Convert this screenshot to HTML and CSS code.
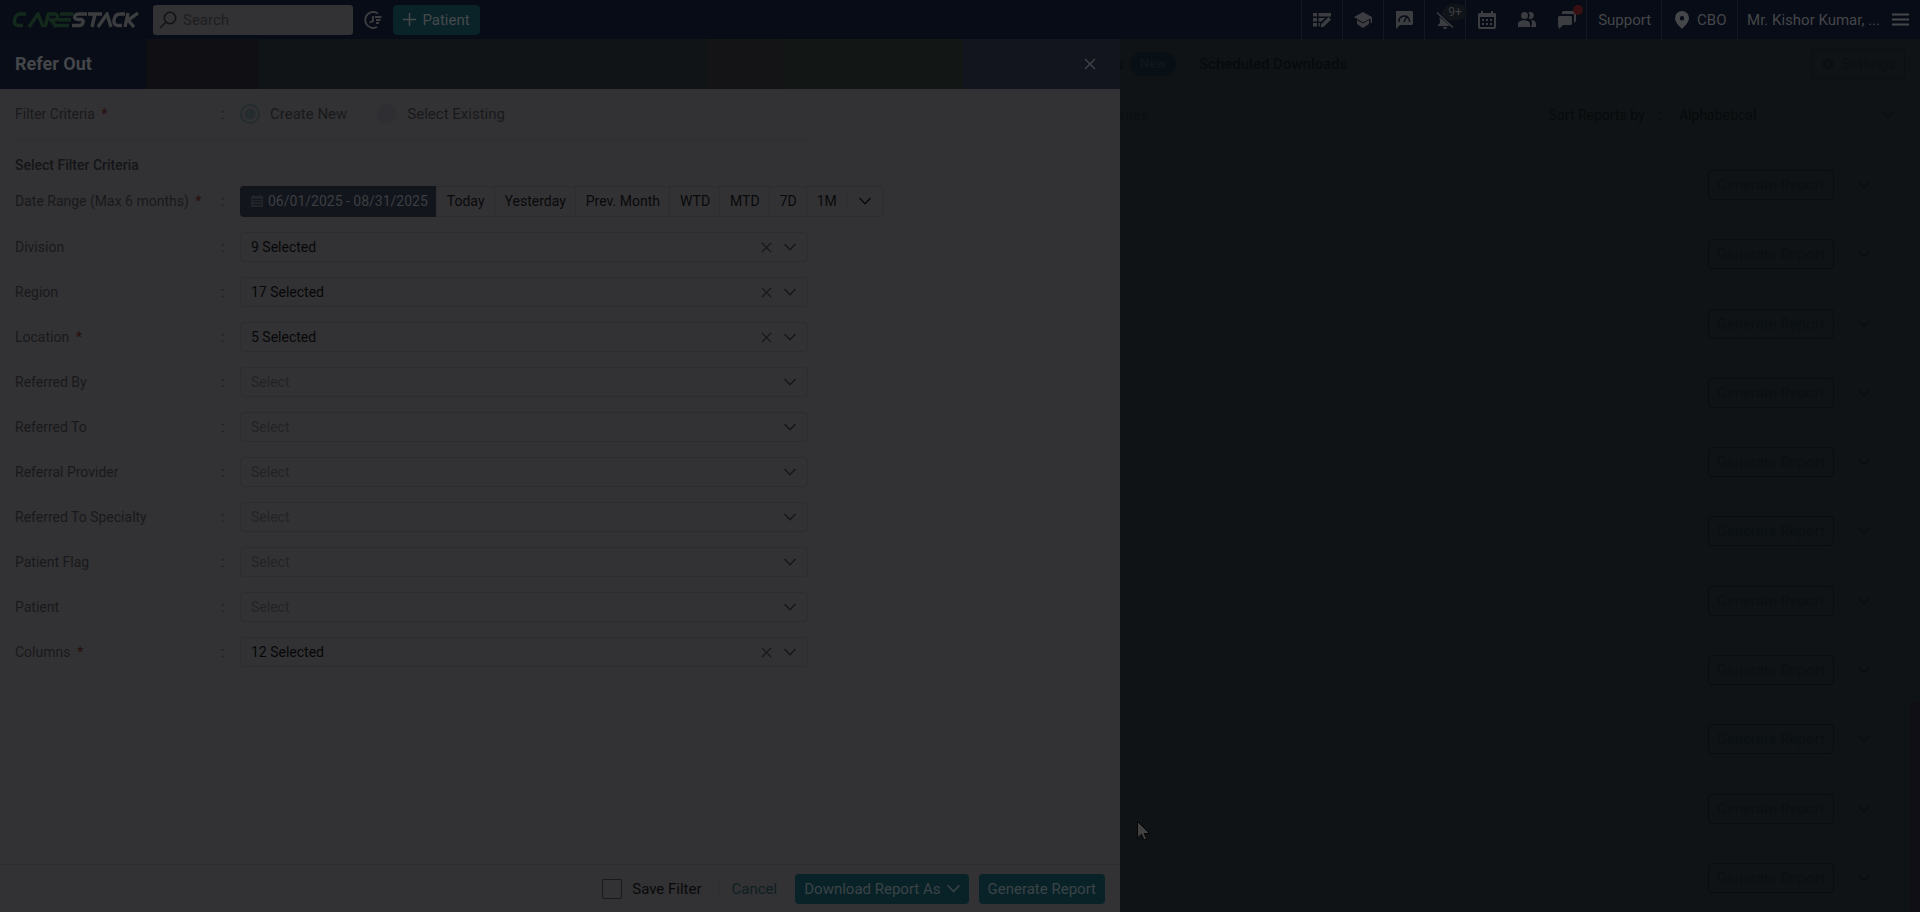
FILE: index.html
```html
<!DOCTYPE html>
<html lang="en">
<head>
<meta charset="utf-8">
<title>CareStack - Refer Out</title>
<link rel="stylesheet" href="styles.css">
</head>
<body>
<svg width="0" height="0" class="defs" aria-hidden="true">
  <symbol id="chev" viewBox="0 0 12 8"><path d="M.5 1L6 6.700 11.500 1" fill="none" stroke="currentColor" stroke-width="1.400"/></symbol>
  <symbol id="x" viewBox="0 0 12 12"><path d="M1 1l10 10M11 1L1 11" fill="none" stroke="currentColor" stroke-width="1.300"/></symbol>
</svg>
<header class="nav">
  <a class="logo" href="#" aria-label="CareStack">
    <svg width="128" height="16" viewBox="0 0 128 16" fill="none" stroke-width="3.400">
      <g class="logo-care"><path d="M14 2H8C5 2 3 5 2.500 8S3 13.500 6 13.500H11M17 15L26 2L31 15M33 15L36.500 2H43C47 2 46 8 42 8H37M40 9l4 6M48 2H61M46 7.800H59M44.500 13.500H57"/></g>
      <g class="logo-stack"><path d="M75 2H67C62 2 61 7.500 66 7.500H69C73 8 71 13.500 67 13.500H60M76 2H90M83 2L80 15M86 15L95 2L99 15M113 2H108C104 2 102.500 5 102 8S103 13.500 106 13.500H110M116 1L113 15M126 1L116 8L122 15"/></g>
    </svg>
  </a>
  <label class="search">
    <svg width="18" height="18" viewBox="0 0 18 18" fill="none" stroke="currentColor" stroke-width="1.500"><circle cx="11" cy="7" r="5.700"/><path d="M7 11L1 17"/></svg>
    <input type="text" placeholder="Search" aria-label="Search">
  </label>
  <button class="icon-btn history" aria-label="Recent">
    <svg width="18" height="18" viewBox="0 0 18 18" fill="none" stroke="currentColor" stroke-width="1.900"><path d="M14 2.500A8 8 0 1 0 13 16M9 5V10L5.500 11.500M11 6H17.500M12 9H16.500M12 12H15"/></svg>
  </button>
  <button class="add"><svg width="13" height="13" viewBox="0 0 13 13" stroke="currentColor" stroke-width="1.500"><path d="M6.500 0V13M0 6.500H13"/></svg>Patient</button>
  <nav class="tools">
    <button class="tool" aria-label="Tasks"><svg width="18" height="16" viewBox="0 0 18 16" fill="currentColor"><path d="M0 1h4v3.500H0zM5.500 1H18v3.500H5.500zM0 6h4v3.500H0zM5.500 6h6.500L8.500 9.500h-3zM0 11h4v3.500H0zM5.500 11h2l-1 3.500h-1zM8 12.500L15.500 5 18 7.500 10.500 15H8z"/></svg></button>
    <button class="tool" aria-label="Learning"><svg width="18" height="16" viewBox="0 0 18 16" fill="currentColor"><path d="M9 0l9 5v6h-1.500V6.500L9 10.500 0 5zM3 8l6 3.500L15 8v4l-6 4-6-4z"/></svg></button>
    <button class="tool" aria-label="Dashboard"><svg width="18" height="18" viewBox="0 0 18 18" fill="currentColor"><path d="M1 0h16l1 1v12l-1 1H5l-4 4V1z"/><path class="cutout" d="M4 11a5.300 5.300 0 0 1 10-3M14.500 11a5 5 0 0 0-.5-3M9 11l3-6" fill="none" stroke-width="1.500"/></svg></button>
    <button class="tool" aria-label="Notifications"><svg width="18" height="18" viewBox="0 0 18 18" fill="currentColor"><path d="M7 2.500C7 0 10.500 0 10.500 2.500 14 4 14 7 14 9.500L6.500 3zM3.500 6L14 15H2v-1l2-2zM7 16h4a2 2 0 0 1-4 0z"/><path d="M1 1.500l16 15" stroke="currentColor" stroke-width="1.600"/></svg><span class="count">9+</span></button>
    <div class="group">
      <button class="icon-btn" aria-label="Calendar"><svg width="18" height="18" viewBox="0 0 18 18" fill="currentColor"><path fill-rule="evenodd" d="M1 2h2V0h2v2h8V0h2v2h2l1 1v13l-1 2H1l-1-2V3zM2 6v10h14V6zM4 8h2v2H4zm4 0h2v2H8zm4 0h2v2h-2zm-8 4h2v2H4zm4 0h2v2H8zm4 0h2v2h-2z"/></svg></button>
      <button class="icon-btn" aria-label="Patients"><svg width="18" height="15" viewBox="0 0 18 15" fill="currentColor"><circle cx="6.500" cy="3.500" r="3.500"/><path d="M0 15v-3c0-5 12-5 12 0v3zM10.500.5a3.500 3.500 0 1 1 0 6 5 5 0 0 0 0-6zM13 15h5v-3c0-2.500-2-4-5-4 1 1 1 2 1 4z"/></svg></button>
      <button class="icon-btn" aria-label="Messages"><svg width="18" height="18" viewBox="0 0 18 18" fill="currentColor"><path d="M5 0h12l1 1v9l-2 2V3H4V1zM1 5h12l1 1v7l-1 1H5l-4 4-1-4V6z"/></svg><span class="dot"></span></button>
    </div>
    <a class="item" href="#">Support</a>
    <a class="item place" href="#"><svg width="14" height="18" viewBox="0 0 14 18" fill="currentColor"><path fill-rule="evenodd" d="M7 0a7 7 0 0 1 7 7c0 4-4 8-7 11C4 15 0 11 0 7a7 7 0 0 1 7-7zm0 5a2.200 2.200 0 1 0 0 4.400A2.200 2.200 0 0 0 7 5z"/></svg>CBO</a>
    <button class="item user">Mr. Kishor Kumar, ...<svg width="17" height="13" viewBox="0 0 17 13" stroke="currentColor" stroke-width="2"><path d="M0 1.500H17M0 6.500H17M0 11.500H17"/></svg></button>
  </nav>
</header>
<div class="work">
  <section class="drawer">
    <header class="drawer-head"><h1>Refer Out</h1><button class="icon-btn close" aria-label="Close"><svg width="12" height="12"><use href="#x"/></svg></button></header>
    <form class="form">
      <div class="row criteria">
        <span class="label">Filter Criteria <b>*</b></span><span class="colon">:</span>
        <label class="radio"><input type="radio" name="mode" checked>Create New</label>
        <label class="radio"><input type="radio" name="mode">Select Existing</label>
      </div>
      <h2>Select Filter Criteria</h2>
      <div class="row dates">
        <span class="label">Date Range (Max 6 months) <b>*</b></span><span class="colon">:</span>
        <div class="ranges">
          <button type="button" class="chosen"><svg width="12" height="12" viewBox="0 0 12 12" fill="currentColor"><path fill-rule="evenodd" d="M0 1h2V0h2v1h4V0h2v1h2v11H0zM1 4v1h10V4zM2 6v1h8V6zM2 9v1h8V9z"/></svg>06/01/2025 - 08/31/2025</button>
          <button type="button">Today</button><button type="button">Yesterday</button><button type="button">Prev. Month</button><button type="button">WTD</button><button type="button">MTD</button><button type="button">7D</button><button type="button">1M</button>
          <button type="button" class="more" aria-label="More ranges"><svg width="12" height="8"><use href="#chev"/></svg></button>
        </div>
      </div>
      <div class="row"><span class="label">Division</span><span class="colon">:</span><button type="button" class="field"><span class="value">9 Selected</span><svg width="11" height="11"><use href="#x"/></svg><svg width="12" height="8"><use href="#chev"/></svg></button></div>
      <div class="row"><span class="label">Region</span><span class="colon">:</span><button type="button" class="field"><span class="value">17 Selected</span><svg width="11" height="11"><use href="#x"/></svg><svg width="12" height="8"><use href="#chev"/></svg></button></div>
      <div class="row"><span class="label">Location <b>*</b></span><span class="colon">:</span><button type="button" class="field"><span class="value">5 Selected</span><svg width="11" height="11"><use href="#x"/></svg><svg width="12" height="8"><use href="#chev"/></svg></button></div>
      <div class="row"><span class="label">Referred By</span><span class="colon">:</span><button type="button" class="field"><span class="value empty">Select</span><svg width="12" height="8"><use href="#chev"/></svg></button></div>
      <div class="row"><span class="label">Referred To</span><span class="colon">:</span><button type="button" class="field"><span class="value empty">Select</span><svg width="12" height="8"><use href="#chev"/></svg></button></div>
      <div class="row"><span class="label">Referral Provider</span><span class="colon">:</span><button type="button" class="field"><span class="value empty">Select</span><svg width="12" height="8"><use href="#chev"/></svg></button></div>
      <div class="row"><span class="label">Referred To Specialty</span><span class="colon">:</span><button type="button" class="field"><span class="value empty">Select</span><svg width="12" height="8"><use href="#chev"/></svg></button></div>
      <div class="row"><span class="label">Patient Flag</span><span class="colon">:</span><button type="button" class="field"><span class="value empty">Select</span><svg width="12" height="8"><use href="#chev"/></svg></button></div>
      <div class="row"><span class="label">Patient</span><span class="colon">:</span><button type="button" class="field"><span class="value empty">Select</span><svg width="12" height="8"><use href="#chev"/></svg></button></div>
      <div class="row"><span class="label">Columns <b>*</b></span><span class="colon">:</span><button type="button" class="field"><span class="value">12 Selected</span><svg width="11" height="11"><use href="#x"/></svg><svg width="12" height="8"><use href="#chev"/></svg></button></div>
    </form>
    <footer class="actions">
      <label class="save"><input type="checkbox">Save Filter</label>
      <button class="cancel">Cancel</button>
      <button class="primary">Download Report As<svg width="13" height="9"><use href="#chev"/></svg></button>
      <button class="primary">Generate Report</button>
    </footer>
  </section>
  <main class="page">
    <div class="tabs"><span class="cut tab-cut">s</span><span class="badge">New</span><a href="#" class="tab">Scheduled Downloads</a>
      <button class="settings"><svg width="12" height="12" viewBox="0 0 12 12" fill="currentColor"><path fill-rule="evenodd" d="M5 0h2l.4 1.700 1.400.7L10.500 2l1.300 2-1.200 1.300v1.400L11.800 8l-1.300 2-1.700-.4-1.400.7L7 12H5l-.4-1.700-1.400-.7L1.500 10 .2 8l1.200-1.300V5.300L.2 4l1.300-2 1.700.4 1.400-.7zM6 4a2 2 0 1 0 0 4 2 2 0 0 0 0-4z"/></svg>Settings</button></div>
    <div class="sort"><span class="cut fav-cut">Favorites</span><label for="sort">Sort Reports by</label><span class="sort-colon">:</span>
      <span class="select"><select id="sort"><option>Alphabetical</option></select><svg width="12" height="8"><use href="#chev"/></svg></span></div>
    <div class="reports">
      <div class="report"><button class="gen">Generate Report</button><button class="icon-btn" aria-label="Expand"><svg width="12" height="8"><use href="#chev"/></svg></button></div>
      <div class="report"><button class="gen">Generate Report</button><button class="icon-btn" aria-label="Expand"><svg width="12" height="8"><use href="#chev"/></svg></button></div>
      <div class="report"><button class="gen">Generate Report</button><button class="icon-btn" aria-label="Expand"><svg width="12" height="8"><use href="#chev"/></svg></button></div>
      <div class="report"><button class="gen">Generate Report</button><button class="icon-btn" aria-label="Expand"><svg width="12" height="8"><use href="#chev"/></svg></button></div>
      <div class="report"><button class="gen">Generate Report</button><button class="icon-btn" aria-label="Expand"><svg width="12" height="8"><use href="#chev"/></svg></button></div>
      <div class="report"><button class="gen">Generate Report</button><button class="icon-btn" aria-label="Expand"><svg width="12" height="8"><use href="#chev"/></svg></button></div>
      <div class="report"><button class="gen">Generate Report</button><button class="icon-btn" aria-label="Expand"><svg width="12" height="8"><use href="#chev"/></svg></button></div>
      <div class="report"><button class="gen">Generate Report</button><button class="icon-btn" aria-label="Expand"><svg width="12" height="8"><use href="#chev"/></svg></button></div>
      <div class="report"><button class="gen">Generate Report</button><button class="icon-btn" aria-label="Expand"><svg width="12" height="8"><use href="#chev"/></svg></button></div>
      <div class="report"><button class="gen">Generate Report</button><button class="icon-btn" aria-label="Expand"><svg width="12" height="8"><use href="#chev"/></svg></button></div>
      <div class="report"><button class="gen">Generate Report</button><button class="icon-btn" aria-label="Expand"><svg width="12" height="8"><use href="#chev"/></svg></button></div>
    </div>
    <span class="thumb"></span>
    <svg class="pointer" width="13" height="20" viewBox="0 0 13 20"><path d="M.5.500v16.500l4-3.700 2.500 5.700 2.700-1.200-2.500-5.300H12.500z" fill="#424243" stroke="#060606"/></svg>
  </main>
</div>
</body>
</html>
```
FILE: styles.css
```css
* { box-sizing: border-box; }
body {
  margin: 0;
  min-height: 100vh;
  display: flex;
  flex-direction: column;
  background: #0f1315;
  font: 14px/20px Roboto, sans-serif;
  color: #19191b;
}
button, input, select { font: inherit; color: inherit; background: none; border: 0; padding: 0; margin: 0; }
a { color: inherit; text-decoration: none; }
svg { flex: none; display: block; }
.defs { position: absolute; }
.icon-btn { display: flex; align-items: center; justify-content: center; }

/* Top bar */
.nav { display: flex; align-items: center; height: 39px; background: #080c16; color: #4a4b4d; font-size: 15px; }
.logo { width: 153px; padding-left: 12px; }
.logo-care { stroke: #13291c; }
.logo-stack { stroke: #3b3c3e; }
.search { display: flex; align-items: center; gap: 6px; width: 200px; height: 30px; padding-left: 6px; border-radius: 3px; background: #323234; color: #111214; }
.search input { flex: 1; min-width: 0; outline: 0; }
.search input::placeholder { color: #1d1e20; opacity: 1; }
.history { width: 40px; color: #3c3d3f; }
.add { display: flex; align-items: center; justify-content: center; gap: 6px; width: 87px; height: 30px; border-radius: 4px; background: #092329; color: #46494b; }
.tools { display: flex; align-self: stretch; margin-left: auto; color: #3c3d40; }
.tools > * { display: flex; align-items: center; border-left: 1px solid #141823; }
.tool { position: relative; justify-content: center; width: 41px; }
.cutout { stroke: #080c16; }
.count { position: absolute; top: 4px; left: 18px; width: 24px; height: 16px; border-radius: 8px; background: #101419; font-size: 12px; line-height: 16px; text-align: center; }
.group { gap: 22px; width: 121px; padding-left: 12px; }
.group .icon-btn { position: relative; }
.dot { position: absolute; top: -6px; right: -7px; width: 10px; height: 10px; border-radius: 5px; background: #391011; }
.item { padding: 0 10px 0 11px; color: #45464a; }
.place { gap: 8px; width: 76px; padding-left: 13px; }
.user { gap: 12px; padding-left: 9px; padding-right: 11px; }

.work { flex: 1; display: grid; grid-template-columns: 7fr 5fr; }

/* Drawer */
.drawer { display: flex; flex-direction: column; background: #323234; }
.drawer-head {
  display: flex; align-items: center; justify-content: space-between; height: 50px; padding: 0 24px 0 15px; color: #45464a;
  background: linear-gradient(90deg, #090d17 0 13%, #100f14 13% 23%, #101416 23% 63%, #141315 63% 70%, #121715 70% 86%, #12151e 86%);
}
h1 { margin: 0; font-size: 18px; line-height: 24px; font-weight: 700; }
.form { flex: 1; padding: 0 15px; }
.row { display: flex; align-items: center; height: 30px; margin-bottom: 15px; }
.dates { margin-bottom: 16px; }
.criteria { height: 51px; width: 793px; margin: 0; border-bottom: 1px solid #2d2e2f; }
h2 { margin: 15px 0 11px; font-size: 14px; line-height: 20px; font-weight: 500; color: #141517; }
.label { width: 206px; }
.label b { margin-left: 3px; font-weight: 500; color: #2a100e; }
.colon { width: 19px; }
.radio { display: flex; align-items: center; gap: 10px; margin-right: 30px; font-size: 15px; }
.radio input { appearance: none; width: 20px; height: 20px; border-radius: 10px; background: #2f2f33; }
.radio input:checked { border: 2px solid #242c2e; background: radial-gradient(circle, #242c2e 5px, #323234 6px); }
.ranges { display: flex; height: 31px; border: 1px solid #2c2d2e; border-radius: 4px; color: #09090a; }
.ranges button { padding: 0 9px 0 10px; border-left: 1px solid #2c2d2e; }
.ranges .chosen { display: flex; align-items: center; gap: 5px; margin: -1px 0 -1px -1px; padding: 0 8px 0 11px; border: 0; border-radius: 4px 0 0 4px; background: #12151c; color: #3d3f42; }
.chosen svg { color: #212429; }
.ranges .more { margin: 5px 0; padding: 0 12px; }
.field { display: flex; align-items: center; gap: 12px; width: 568px; height: 30px; padding: 0 11px 0 10px; border: 1px solid #2c2d2e; border-radius: 4px; color: #070708; }
.field svg { color: #151617; }
.value { margin-right: auto; }
.empty { color: #222325; }
.actions { display: flex; align-items: center; justify-content: flex-end; height: 48px; padding-right: 15px; border-top: 1px solid #2b2c2e; font-size: 15px; }
.save { display: flex; align-items: center; gap: 10px; padding-right: 16px; border-right: 1px solid #2c2d2e; color: #09090a; }
.save input { appearance: none; width: 20px; height: 20px; border: 1px solid #191a1c; border-radius: 2px; }
.cancel { padding: 0 18px 0 13px; color: #0e1f22; }
.primary { display: flex; align-items: center; gap: 6px; height: 30px; padding: 0 9px; border-radius: 4px; background: #092228; color: #3b4446; }
.primary + .primary { margin-left: 10px; }

/* Reports list */
.page { position: relative; display: flex; flex-direction: column; min-width: 0; overflow: hidden; color: #080a0c; }
.tabs { display: flex; align-items: center; height: 50px; padding-right: 15px; }
.cut { display: flex; justify-content: flex-end; overflow: hidden; }
.tab-cut { width: 4px; }
.fav-cut { width: 28px; margin-right: auto; color: #0b0e10; }
.tab-cut, .tab { font-size: 15px; font-weight: 500; }
.badge { margin: 0 23px 0 6px; width: 46px; height: 24px; border-radius: 12px; background: #081015; color: #11171a; font-size: 13px; line-height: 24px; font-weight: 500; text-align: center; }
.settings { display: flex; align-items: center; gap: 7px; height: 30px; margin-left: auto; padding: 0 8px 0 9px; border: 1px solid #090f12; border-radius: 4px; color: #0a0f13; font-size: 15px; }
.sort { display: flex; align-items: center; height: 52px; padding-right: 26px; }
.sort-colon { margin: 0 8px 0 14px; }
.select { display: flex; align-items: center; width: 224px; padding-left: 8px; border-left: 1px solid #111416; }
.select select { flex: 1; appearance: none; }
.select svg, .report svg { color: #0b0e10; }
.reports { flex: 1; display: flex; flex-direction: column; justify-content: space-between; padding: 29px 50px 19px; }
.report { display: flex; align-items: center; justify-content: flex-end; gap: 24px; }
.gen { height: 30px; padding: 0 8px; border: 1px solid #090d10; border-radius: 4px; color: #0a0f14; font-size: 15px; }
.thumb { position: absolute; right: 0; bottom: 0; width: 10px; height: 24%; border-radius: 3px 0 0 0; background: #100f15; }
.pointer { position: absolute; left: 17px; bottom: 71px; }
```
